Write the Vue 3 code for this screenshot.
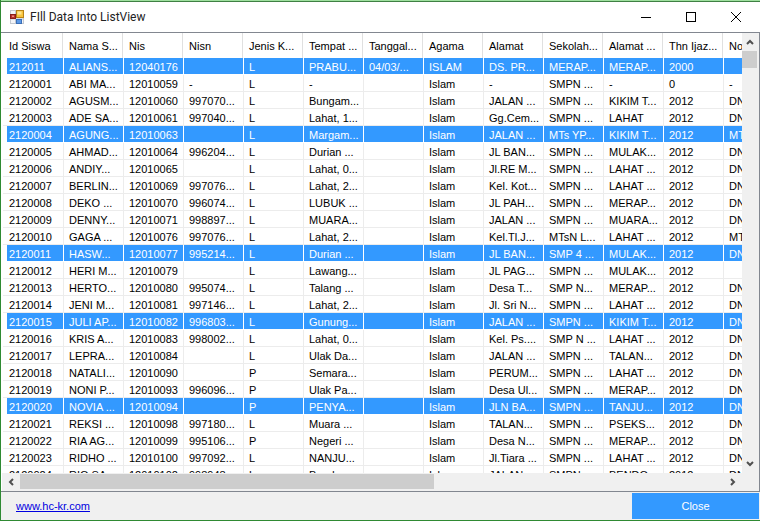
<script setup>
const columns = ['Id Siswa', 'Nama S...', 'Nis', 'Nisn', 'Jenis K...', 'Tempat ...', 'Tanggal...', 'Agama', 'Alamat', 'Sekolah...', 'Alamat ...', 'Thn Ijaz...', 'No']

const rows = [
  ['212011', 'ALIANS...', '12040176', '', 'L', 'PRABU...', '04/03/...', 'ISLAM', 'DS. PR...', 'MERAP...', 'MERAP...', '2000', ''],
  ['2120001', 'ABI MA...', '12010059', '-', 'L', '-', '', 'Islam', '-', 'SMPN ...', '-', '0', '-'],
  ['2120002', 'AGUSM...', '12010060', '997070...', 'L', 'Bungam...', '', 'Islam', 'JALAN ...', 'SMPN ...', 'KIKIM T...', '2012', 'DN'],
  ['2120003', 'ADE SA...', '12010061', '997040...', 'L', 'Lahat, 1...', '', 'Islam', 'Gg.Cem...', 'SMPN ...', 'LAHAT', '2012', 'DN'],
  ['2120004', 'AGUNG...', '12010063', '', 'L', 'Margam...', '', 'Islam', 'JALAN ...', 'MTs YP...', 'KIKIM T...', '2012', 'MT'],
  ['2120005', 'AHMAD...', '12010064', '996204...', 'L', 'Durian ...', '', 'Islam', 'JL BAN...', 'SMPN ...', 'MULAK...', '2012', 'DN'],
  ['2120006', 'ANDIY...', '12010065', '', 'L', 'Lahat, 0...', '', 'Islam', 'Jl.RE M...', 'SMPN ...', 'LAHAT ...', '2012', 'DN'],
  ['2120007', 'BERLIN...', '12010069', '997076...', 'L', 'Lahat, 2...', '', 'Islam', 'Kel. Kot...', 'SMPN ...', 'LAHAT ...', '2012', 'DN'],
  ['2120008', 'DEKO ...', '12010070', '996074...', 'L', 'LUBUK ...', '', 'Islam', 'JL PAH...', 'SMPN ...', 'MERAP...', '2012', 'DN'],
  ['2120009', 'DENNY...', '12010071', '998897...', 'L', 'MUARA...', '', 'Islam', 'JALAN ...', 'SMPN ...', 'MUARA...', '2012', 'DN'],
  ['2120010', 'GAGA ...', '12010076', '997076...', 'L', 'Lahat, 2...', '', 'Islam', 'Kel.Tl.J...', 'MTsN L...', 'LAHAT ...', '2012', 'MT'],
  ['2120011', 'HASW...', '12010077', '995214...', 'L', 'Durian ...', '', 'Islam', 'JL BAN...', 'SMP 4 ...', 'MULAK...', '2012', 'DN'],
  ['2120012', 'HERI M...', '12010079', '', 'L', 'Lawang...', '', 'Islam', 'JL PAG...', 'SMPN ...', 'MULAK...', '2012', ''],
  ['2120013', 'HERTO...', '12010080', '995074...', 'L', 'Talang ...', '', 'Islam', 'Desa T...', 'SMP N...', 'MERAP...', '2012', 'DN'],
  ['2120014', 'JENI M...', '12010081', '997146...', 'L', 'Lahat, 2...', '', 'Islam', 'Jl. Sri N...', 'SMPN ...', 'LAHAT ...', '2012', 'DN'],
  ['2120015', 'JULI AP...', '12010082', '996803...', 'L', 'Gunung...', '', 'Islam', 'JALAN ...', 'SMPN ...', 'KIKIM T...', '2012', 'DN'],
  ['2120016', 'KRIS A...', '12010083', '998002...', 'L', 'Lahat, 0...', '', 'Islam', 'Kel. Ps....', 'SMP N ...', 'LAHAT ...', '2012', 'DN'],
  ['2120017', 'LEPRA...', '12010084', '', 'L', 'Ulak Da...', '', 'Islam', 'JALAN ...', 'SMPN ...', 'TALAN...', '2012', 'DN'],
  ['2120018', 'NATALI...', '12010090', '', 'P', 'Semara...', '', 'Islam', 'PERUM...', 'SMPN ...', 'LAHAT ...', '2012', 'DN'],
  ['2120019', 'NONI P...', '12010093', '996096...', 'P', 'Ulak Pa...', '', 'Islam', 'Desa Ul...', 'SMPN ...', 'MERAP...', '2012', 'DN'],
  ['2120020', 'NOVIA ...', '12010094', '', 'P', 'PENYA...', '', 'Islam', 'JLN BA...', 'SMPN ...', 'TANJU...', '2012', 'DN'],
  ['2120021', 'REKSI ...', '12010098', '997180...', 'L', 'Muara ...', '', 'Islam', 'TALAN...', 'SMPN ...', 'PSEKS...', '2012', 'DN'],
  ['2120022', 'RIA AG...', '12010099', '995106...', 'P', 'Negeri ...', '', 'Islam', 'Desa N...', 'SMPN ...', 'MERAP...', '2012', 'DN'],
  ['2120023', 'RIDHO ...', '12010100', '997092...', 'L', 'NANJU...', '', 'Islam', 'Jl.Tiara ...', 'SMPN ...', 'LAHAT ...', '2012', 'DN'],
  ['2120024', 'RIO SA...', '12010102', '998948...', 'L', 'Bandu...', '', 'Islam', 'JALAN ...', 'SMPN ...', 'BENDO...', '2012', 'DN'],
]

const highlighted = new Set(['212011', '2120004', '2120011', '2120015', '2120020'])
</script>

<template>
  <main class="window">
    <header class="titlebar">
      <svg class="app-icon" viewBox="0 0 14 14" aria-hidden="true">
        <rect x="0.5" y="0.5" width="13" height="13" fill="#f4f5f8" stroke="#c3c8d0" />
        <path d="M5.5 1v12M1 9h12" stroke="#c3c8d0" fill="none" />
        <rect x="6.5" y="0.5" width="7" height="7" fill="#f8c43c" stroke="#b98216" />
        <rect x="7.5" y="1.5" width="4" height="3" fill="#ffe58f" />
        <rect x="0.5" y="4.5" width="5" height="4" fill="#b8342e" stroke="#8a1c18" />
        <rect x="2" y="5.5" width="2" height="1.5" fill="#ee8a80" />
        <rect x="6.5" y="9.5" width="5" height="4" fill="#5b98e6" stroke="#3a6fb8" />
      </svg>
      <h1>FIll Data Into ListView</h1>
      <div class="controls">
        <button type="button" aria-label="Minimize">
          <svg viewBox="0 0 12 12"><path d="M1 6.5h10" /></svg>
        </button>
        <button type="button" aria-label="Maximize">
          <svg viewBox="0 0 12 12"><rect x="1.5" y="1.5" width="9" height="9" /></svg>
        </button>
        <button type="button" aria-label="Close window">
          <svg viewBox="0 0 12 12"><path d="M1 1l10 10M11 1L1 11" /></svg>
        </button>
      </div>
    </header>

    <section class="listview">
      <div class="viewport">
        <table>
          <thead>
            <tr>
              <th v-for="(c, i) in columns" :key="i" scope="col">{{ c }}</th>
            </tr>
          </thead>
          <tbody>
            <tr v-for="r in rows" :key="r[0]" :class="{ selected: highlighted.has(r[0]) }">
              <td v-for="(v, i) in r" :key="i">{{ v }}</td>
            </tr>
          </tbody>
        </table>
      </div>
      <div class="vscroll">
        <button type="button" aria-label="Scroll up">
          <svg viewBox="0 0 8 8"><path d="M1 6l3-3 3 3" /></svg>
        </button>
        <div class="thumb"></div>
        <button type="button" class="end" aria-label="Scroll down">
          <svg viewBox="0 0 8 8"><path d="M1 2l3 3 3-3" /></svg>
        </button>
      </div>
      <div class="hscroll">
        <button type="button" aria-label="Scroll left">
          <svg viewBox="0 0 8 8"><path d="M6 1L3 4l3 3" /></svg>
        </button>
        <div class="thumb"></div>
        <button type="button" class="end" aria-label="Scroll right">
          <svg viewBox="0 0 8 8"><path d="M2 1l3 3-3 3" /></svg>
        </button>
      </div>
    </section>

    <footer class="footer">
      <a href="#">www.hc-kr.com</a>
      <button type="button" class="close">Close</button>
    </footer>
  </main>
</template>

<style>
body {
  margin: 0;
}
</style>

<style scoped>
.window {
  box-sizing: border-box;
  display: flex;
  flex-direction: column;
  height: 100vh;
  border: 1px solid #2f8a33;
  border-top: 0;
  border-right: 0;
  background: #f0f0f0;
  color: #000;
  font: 11px/16px "Liberation Sans", Arial, sans-serif;
}
button {
  border: 0;
  padding: 0;
  background: none;
  font: inherit;
}
.titlebar {
  box-sizing: border-box;
  display: flex;
  align-items: center;
  flex: none;
  height: 32px;
  padding-left: 9px;
  border-top: 1px solid #9fe09f;
  box-shadow: inset 0 1px #3f8043;
  background: #fff;
}
.app-icon {
  width: 14px;
  height: 14px;
}
h1 {
  margin: 0 0 0 6px;
  color: #222;
  font: 12px/16px Roboto, sans-serif;
}
.controls {
  display: flex;
  margin-left: auto;
  padding-right: 2px;
}
.controls button {
  display: grid;
  place-items: center;
  width: 45px;
  height: 28px;
}
.controls svg {
  width: 12px;
  height: 12px;
  fill: none;
  stroke: #000;
}
.listview {
  display: grid;
  grid-template: minmax(0, 1fr) 18px / minmax(0, 1fr) 17px;
  flex: 1;
  min-height: 0;
  padding-left: 1px;
  border: 1px solid #828790;
  border-left-width: 0;
  background: #fff;
}
.viewport {
  overflow: hidden;
  padding-left: 1px;
}
table {
  table-layout: fixed;
  width: 780px;
  border-collapse: separate;
  border-spacing: 0;
}
th,
td {
  box-sizing: border-box;
  width: 60px;
  padding: 0 0 0 6px;
  overflow: hidden;
  white-space: nowrap;
  text-align: left;
  font-weight: 400;
}
th {
  height: 25px;
  border-right: 1px solid #e0e0e0;
}
td {
  height: 17px;
  padding-top: 2px;
  line-height: 14px;
  border-bottom: 1px solid #ececec;
}
td + td {
  padding-left: 5px;
  border-left: 1px solid #ececec;
}
.selected td {
  background: #3399ff;
  color: #fff;
  border-color: #fff;
}
.selected td:first-child {
  background: linear-gradient(to right, #fff 4px, #3399ff 4px);
}
.vscroll {
  display: flex;
  flex-direction: column;
  background: #f0f0f0;
}
.hscroll {
  display: flex;
  grid-column: 1 / -1;
  padding-right: 17px;
  background: #f0f0f0;
}
.vscroll button,
.hscroll button {
  display: grid;
  flex: none;
  place-items: center;
  width: 18px;
  height: 18px;
}
.vscroll button {
  width: 15px;
}
.vscroll svg,
.hscroll svg {
  width: 8px;
  height: 8px;
  fill: none;
  stroke: #505050;
  stroke-width: 2;
}
.vscroll .thumb {
  width: 15px;
  height: 17px;
  background: #cdcdcd;
}
.hscroll .thumb {
  width: 56%;
  height: 15px;
  margin-top: 1px;
  background: #cdcdcd;
}
.vscroll .end {
  margin-top: auto;
}
.hscroll .end {
  margin-left: auto;
}
.footer {
  display: flex;
  align-items: center;
  flex: none;
  height: 28px;
  padding-left: 15px;
}
.footer a {
  color: #0000e0;
}
.close {
  width: 127px;
  height: 26px;
  margin-left: auto;
  margin-right: 1px;
  background: #3399ff;
  color: #fff;
}
</style>
